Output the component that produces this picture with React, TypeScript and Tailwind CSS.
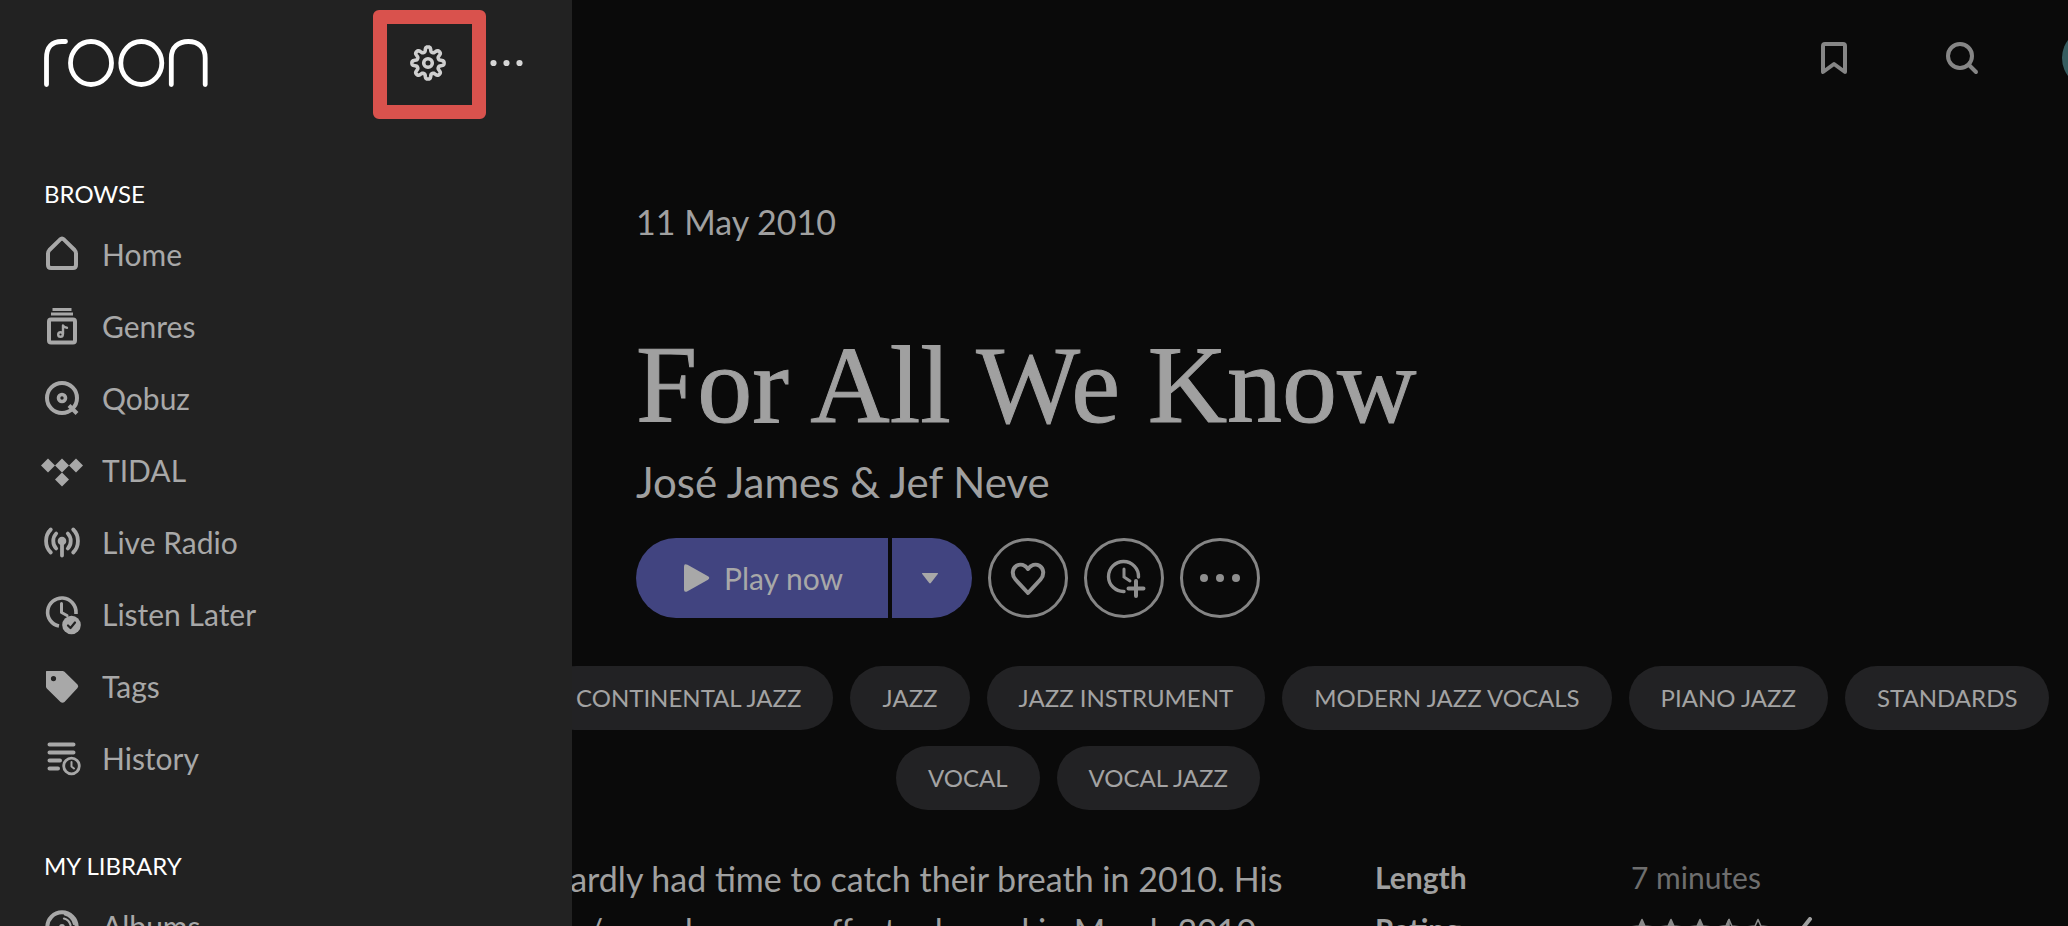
import type { ReactNode } from "react";

function gearPath(): string {
  const pts: string[] = [];
  for (let i = 0; i < 240; i++) {
    const a = (i / 240) * Math.PI * 2;
    const r = 13.7 + 2.5 * Math.tanh(1.8 * Math.cos(8 * a));
    pts.push(`${(18 + r * Math.sin(a)).toFixed(2)} ${(18 - r * Math.cos(a)).toFixed(2)}`);
  }
  return `M${pts.join("L")}Z`;
}

function Icon({ children }: { children: ReactNode }) {
  return (
    <svg width="44" height="44" viewBox="0 0 44 44" fill="none" stroke="currentColor" strokeWidth="4" strokeLinecap="round" strokeLinejoin="round" aria-hidden="true">
      {children}
    </svg>
  );
}

const home = (
  <Icon>
    <path d="M20 6.6Q22 4.8 24 6.6L34.6 17Q36 18.500 36 20.500V32Q36 35 33 35H11Q8 35 8 32V20.500Q8 18.500 9.400 17Z" />
  </Icon>
);

const genres = (
  <Icon>
    <g strokeWidth="3" strokeLinecap="butt">
      <path d="M12.500 4.500H31.500M11 9H33" />
    </g>
    <rect x="9" y="14.500" width="26" height="23" rx="2" />
    <circle cx="20.500" cy="29.500" r="2.300" strokeWidth="2.400" />
    <path d="M23 29V20.500Q24 22.500 27 22.800" strokeWidth="2.400" />
  </Icon>
);

const qobuz = (
  <Icon>
    <circle cx="22" cy="21" r="15" />
    <circle cx="22" cy="21" r="3.500" strokeWidth="3.600" />
    <path d="M29 28.500L37 36.500" strokeLinecap="butt" />
  </Icon>
);

const tidal = (
  <Icon>
    <g fill="currentColor" stroke="none">
      <path d="M8 9.500L15 16.500L8 23.500L1 16.500Z" />
      <path d="M22 9.500L29 16.500L22 23.500L15 16.500Z" />
      <path d="M36 9.500L43 16.500L36 23.500L29 16.500Z" />
      <path d="M22 23.500L29 30.500L22 37.500L15 30.500Z" />
    </g>
  </Icon>
);

const radio = (
  <Icon>
    <circle cx="22" cy="20" r="4.300" fill="currentColor" stroke="none" />
    <path d="M22 20V34.500M16.200 12.500C12.300 16.500 12.300 23.500 16.200 27.500M27.800 12.500C31.700 16.500 31.700 23.500 27.800 27.500M10.800 8.500C4.500 14.500 4.500 25.500 10.800 31.500M33.200 8.500C39.500 14.500 39.500 25.500 33.200 31.500" strokeWidth="3.800" />
  </Icon>
);

const later = (
  <Icon>
    <path d="M19 33.100A14.200 14.200 0 1 1 36 19.500V21" strokeWidth="3.600" strokeLinecap="butt" />
    <path d="M21.500 10.500V19.500L27 22.500" strokeWidth="3" />
    <circle cx="31.500" cy="32" r="9.300" fill="currentColor" stroke="none" />
    <path d="M28 32.500L30.500 35L35 29.500" stroke="#222222" strokeWidth="2.200" />
  </Icon>
);

const tag = (
  <Icon>
    <path fillRule="evenodd" fill="currentColor" stroke="none" d="M6 6.500Q6 6 6.500 6H22.500Q23.500 6 24.500 6.800L37.500 19.500Q39 21 37.500 23L24.500 37Q22.500 38.500 20.500 37L6.800 23.500Q6 22.500 6 21.500ZM13.500 11A2.600 2.600 0 1 0 13.500 16.200A2.600 2.600 0 1 0 13.500 11Z" />
  </Icon>
);

const history = (
  <Icon>
    <path d="M9.500 7.500H33.500M9.500 15.500H33.500M9.500 23.500H20M9.500 31.500H18" />
    <circle cx="31.500" cy="29" r="7.800" strokeWidth="2.800" />
    <path d="M31.500 25V29.500L34 31.500" strokeWidth="2" />
  </Icon>
);

const albums = (
  <Icon>
    <circle cx="22" cy="22" r="14.700" />
    <path d="M24 13.500A9 9 0 0 1 30.500 20M25 9.500A13 13 0 0 1 34 19" strokeWidth="2.200" />
    <circle cx="22" cy="22" r="3" fill="currentColor" stroke="none" />
  </Icon>
);

const browse: { label: string; icon: ReactNode }[] = [
  { label: "Home", icon: home },
  { label: "Genres", icon: genres },
  { label: "Qobuz", icon: qobuz },
  { label: "TIDAL", icon: tidal },
  { label: "Live Radio", icon: radio },
  { label: "Listen Later", icon: later },
  { label: "Tags", icon: tag },
  { label: "History", icon: history },
];

function NavItem({ label, icon }: { label: string; icon: ReactNode }) {
  return (
    <li>
      <a href="#" className="flex h-[72px] items-center gap-[18px] text-[30px] leading-9">
        {icon}
        <span className="pb-[2px]">{label}</span>
      </a>
    </li>
  );
}

function SectionTitle({ children }: { children: ReactNode }) {
  return <h2 className="flex h-[50px] items-center pl-1 text-2xl text-white">{children}</h2>;
}

function Sidebar() {
  return (
    <aside className="relative z-10 h-full w-[572px] shrink-0 overflow-hidden bg-[#222222] text-[#a8a8a8]">
      <div className="flex items-start pt-[10px]">
        <svg className="mt-7 ml-[43px]" width="168" height="52" viewBox="0 0 168 52" fill="none" stroke="#ffffff" strokeWidth="4.800" strokeLinecap="round" role="img" aria-label="roon">
          <path d="M3.500 46.500V20Q3.500 3.500 19 3.500H22.500" />
          <ellipse cx="48" cy="25" rx="20.500" ry="21.500" />
          <ellipse cx="98.300" cy="25" rx="20.500" ry="21.500" />
          <path d="M128.300 46.500V20C128.300 9 135.500 3.500 145.300 3.500C155 3.500 162.200 9 162.200 20V46.500" />
        </svg>
        <button aria-label="Settings" className="ml-[162px] flex h-[109px] w-[113px] items-center justify-center rounded-md border-[14px] border-[#d9524d] pr-[3px] pb-[3px] text-[#cfcfcf]">
          <svg width="36" height="36" viewBox="0 0 36 36" fill="none" stroke="currentColor" strokeWidth="3.600" strokeLinejoin="round" className="shrink-0">
            <path d={gearPath()} />
            <circle cx="18" cy="18" r="4.300" />
          </svg>
        </button>
        <button aria-label="More" className="mt-9 ml-1 text-[#d6d6d6]">
          <svg width="34" height="34" viewBox="0 0 34 34" fill="currentColor">
            <circle cx="3.500" cy="17" r="3.100" />
            <circle cx="16.500" cy="17" r="3.100" />
            <circle cx="29.500" cy="17" r="3.100" />
          </svg>
        </button>
      </div>
      <nav aria-label="Browse" className="mt-[50px] pl-10">
        <SectionTitle>BROWSE</SectionTitle>
        <ul>
          {browse.map((item) => (
            <NavItem key={item.label} {...item} />
          ))}
        </ul>
      </nav>
      <nav aria-label="My library" className="mt-[46px] pl-10">
        <SectionTitle>MY LIBRARY</SectionTitle>
        <ul>
          <NavItem label="Albums" icon={albums} />
        </ul>
      </nav>
    </aside>
  );
}

function Chip({ children }: { children: ReactNode }) {
  return (
    <a href="#" className="flex h-16 shrink-0 items-center rounded-full bg-[#222224] px-8 text-2xl whitespace-nowrap text-[#a3a3a3]">
      {children}
    </a>
  );
}

function RoundButton({ label, children }: { label: string; children: ReactNode }) {
  return (
    <button aria-label={label} className="flex size-20 items-center justify-center rounded-full border-[3px] border-[#858585] text-[#8f8f8f]">
      {children}
    </button>
  );
}

const starPath = "M11 1.500L13.900 8L21 8.700L15.700 13.400L17.200 20.300L11 16.700L4.800 20.300L6.300 13.400L1 8.700L8.100 8Z";

function Star({ fill }: { fill: "full" | "half" | "none" }) {
  return (
    <svg width="22" height="22" viewBox="0 0 22 22" stroke="currentColor" strokeWidth="1.600" strokeLinejoin="round" fill={fill === "full" ? "currentColor" : "none"}>
      <path d={starPath} />
      {fill === "half" && <path d="M11 1.500V16.700L4.800 20.300L6.300 13.400L1 8.700L8.100 8Z" fill="currentColor" />}
    </svg>
  );
}

export default function App() {
  return (
    <div className="flex h-screen overflow-hidden bg-[#0a0a0a] font-['Lato',sans-serif]">
      <Sidebar />
      <main className="min-w-0 flex-1 overflow-hidden text-[#a0a0a0]">
        <header className="flex h-[116px] items-center justify-end text-[#868686]">
          <button aria-label="Bookmarks">
            <svg width="40" height="40" viewBox="0 0 40 40" fill="none" stroke="currentColor" strokeWidth="4" strokeLinejoin="round">
              <path d="M9 8Q9 6 11 6H29Q31 6 31 8V34L20 26L9 34Z" />
            </svg>
          </button>
          <button aria-label="Search" className="ml-[88px]">
            <svg width="40" height="40" viewBox="0 0 40 40" fill="none" stroke="currentColor" strokeWidth="4" strokeLinecap="round">
              <circle cx="18" cy="18" r="12" />
              <path d="M27 27L34 34" />
            </svg>
          </button>
          <button aria-label="Profile" className="-mr-[54px] ml-20 size-[60px] shrink-0 rounded-full bg-[#375c60]" />
        </header>

        <div className="pl-16">
          <p className="mt-[85px] text-[34px] leading-[42px]">11 May 2010</p>
          <h1 className="mt-[82px] font-['Liberation_Serif',serif] text-[110px] leading-[120px] [-webkit-text-stroke:1px_#a0a0a0]">For All We Know</h1>
          <p className="mt-3 text-[42px] leading-[50px]">José James &amp; Jef Neve</p>

          <div className="mt-[31px] flex gap-4">
            <div className="flex gap-1 text-[#a8a8a8]">
              <button className="flex h-20 w-[252px] items-center gap-[13px] rounded-l-full bg-[#414480] pl-[47px] text-[30px]">
                <svg width="28" height="30" viewBox="0 0 28 30" fill="currentColor">
                  <path d="M1 3.500Q1 0 4.500 1.800L25 13.300Q27.500 15 25 16.700L4.500 28.200Q1 30 1 26.500Z" />
                </svg>
                Play now
              </button>
              <button aria-label="Play options" className="flex h-20 w-20 items-center justify-center rounded-r-full bg-[#414480] pr-1">
                <svg width="18" height="12" viewBox="0 0 18 12" fill="currentColor">
                  <path d="M1.500 1H16.500Q17.500 1 16.800 2L9.800 11Q9 11.800 8.200 11L1.200 2Q.5 1 1.500 1Z" />
                </svg>
              </button>
            </div>
            <RoundButton label="Favorite">
              <svg width="40" height="40" viewBox="0 0 40 40" fill="none" stroke="currentColor" strokeWidth="4" strokeLinejoin="round">
                <path d="M20 35L7.500 21.500C3.500 17 4 10.500 8.500 7.800C12.500 5.500 17 7 20 11C23 7 27.500 5.500 31.500 7.800C36 10.500 36.500 17 32.500 21.500Z" />
              </svg>
            </RoundButton>
            <RoundButton label="Add to Listen Later">
              <svg width="44" height="44" viewBox="0 0 44 44" fill="none" stroke="currentColor" strokeLinecap="round">
                <path d="M22 35.500A15 15 0 1 1 36.500 21" strokeWidth="3.400" />
                <path d="M22 13V21L28 25" strokeWidth="3" />
                <path d="M34 25V40M26.500 32.500H41.500" strokeWidth="4" />
              </svg>
            </RoundButton>
            <RoundButton label="More options">
              <svg width="40" height="10" viewBox="0 0 40 10" fill="currentColor">
                <circle cx="4" cy="5" r="4" />
                <circle cx="20" cy="5" r="4" />
                <circle cx="36" cy="5" r="4" />
              </svg>
            </RoundButton>
          </div>
        </div>

        <div className="mt-12 -ml-7 flex gap-[17px]">
          <Chip>CONTINENTAL JAZZ</Chip>
          <Chip>JAZZ</Chip>
          <Chip>JAZZ INSTRUMENT</Chip>
          <Chip>MODERN JAZZ VOCALS</Chip>
          <Chip>PIANO JAZZ</Chip>
          <Chip>STANDARDS</Chip>
        </div>
        <div className="mt-4 flex gap-[17px] pl-[324px]">
          <Chip>VOCAL</Chip>
          <Chip>VOCAL JAZZ</Chip>
        </div>

        <div className="mt-[43px] flex">
          <p className="-ml-[100px] w-[903px] shrink-0 text-[34px] leading-[52px] whitespace-nowrap">
            have hardly had time to catch their breath in 2010. His
            <br />
            neo-era/sound groove effort released in March 2010
          </p>
          <dl className="grid flex-1 grid-cols-[256px_1fr] text-[30px] leading-[48px]">
            <dt className="font-bold">Length</dt>
            <dd className="text-[#6e6e6e]">7 minutes</dd>
            <dt className="font-bold">Rating</dt>
            <dd className="flex items-center gap-[7px] pb-1 text-[#8a8a8a]">
              <Star fill="full" />
              <Star fill="full" />
              <Star fill="full" />
              <Star fill="half" />
              <Star fill="none" />
              <svg className="ml-2" width="30" height="24" viewBox="0 0 30 24" fill="none" stroke="#a0a0a0" strokeWidth="4" strokeLinecap="round" aria-hidden="true">
                <path d="M4 12L11 21L26 2" />
              </svg>
            </dd>
          </dl>
        </div>
      </main>
    </div>
  );
}
